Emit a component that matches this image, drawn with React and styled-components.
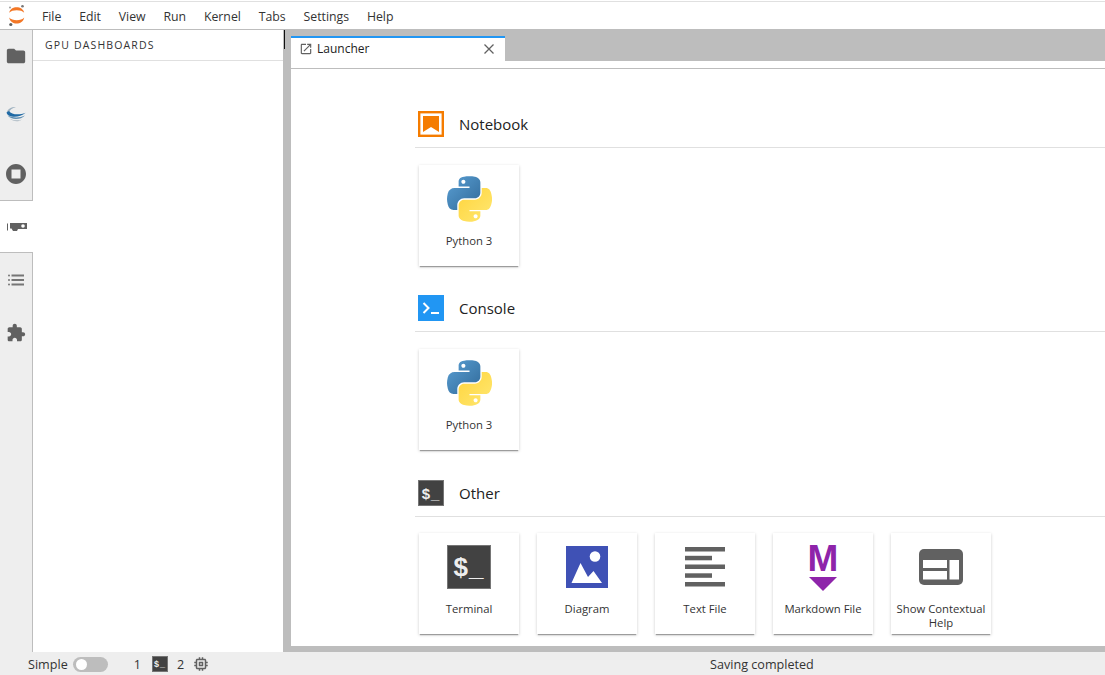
import React from 'react';
import styled, { createGlobalStyle } from 'styled-components';

const GlobalStyle = createGlobalStyle`
  html, body, #root { margin: 0; height: 100%; }
  body {
    font-family: "Open Sans", "Noto Sans", sans-serif;
    color: #333;
    background: #fff;
    overflow: hidden;
  }
`;

const Shell = styled.div`
  display: flex;
  flex-direction: column;
  width: 1105px;
  height: 675px;
`;

const TopBar = styled.header`
  display: flex;
  align-items: center;
  height: 27px;
  margin-top: 1px;
  border-top: 1px solid #e0e0e0;
  border-bottom: 1px solid #bdbdbd;
  flex: none;
`;

const LogoSlot = styled.div`
  width: 33px;
  display: flex;
  justify-content: center;
`;

const MenuItem = styled.div`
  font-size: 12.3px;
  padding: 2px 8.9px 0;
  color: #333;
`;

const Body = styled.div`
  flex: 1;
  display: flex;
  min-height: 0;
`;

const SideBar = styled.nav`
  width: 33px;
  flex: none;
  display: flex;
  flex-direction: column;
  background: #eee;
`;

const SideTab = styled.div`
  height: ${(p) => p.$h}px;
  flex: none;
  display: flex;
  align-items: center;
  justify-content: center;
  box-sizing: border-box;
  background: ${(p) => (p.$active ? '#fff' : '#eee')};
  border-right: ${(p) => (p.$active ? 'none' : '1px solid #bdbdbd')};
  border-bottom: ${(p) => (p.$last ? '1px solid #bdbdbd' : 'none')};
  border-top: ${(p) => (p.$first ? '1px solid #bdbdbd' : 'none')};
`;

const SideRest = styled.div`
  flex: 1;
  border-right: 1px solid #bdbdbd;
`;

const Panel = styled.aside`
  width: 250px;
  flex: none;
  background: #fff;
`;

const PanelHead = styled.div`
  height: 31px;
  box-sizing: border-box;
  display: flex;
  align-items: center;
  padding-left: 12px;
  border-bottom: 1px solid #e0e0e0;
  font-size: 10.5px;
  letter-spacing: 1.15px;
  color: #333;
`;

const Splitter = styled.div`
  width: 8px;
  flex: none;
  background: #bdbdbd;
  position: relative;
`;

const Caret = styled.span`
  position: absolute;
  left: 1px;
  top: 0;
  width: 1px;
  height: 19px;
  background: #111;
`;

const Main = styled.main`
  flex: 1;
  min-width: 0;
  display: flex;
  flex-direction: column;
  background: #bdbdbd;
  padding-bottom: 6px;
`;

const TabStrip = styled.div`
  height: 31px;
  flex: none;
  display: flex;
  align-items: flex-end;
  background: #bdbdbd;
`;

const Tab = styled.div`
  width: 214px;
  height: 25px;
  box-sizing: border-box;
  display: flex;
  align-items: center;
  padding: 0 10px 2px 8px;
  background: #fff;
  border-top: 2px solid #2196f3;
  font-size: 12px;
  color: #222;
`;

const TabLabel = styled.span`
  flex: 1;
  margin-left: 4px;
`;

const TabBand = styled.div`
  height: 8px;
  flex: none;
  box-sizing: border-box;
  background: #fff;
  border-bottom: 1px solid #bdbdbd;
`;

const Launcher = styled.section`
  flex: 1;
  min-height: 0;
  overflow: hidden;
  background: #fff;
  padding: 42px 0 0 124px;
`;

const Section = styled.div`
  margin-bottom: ${(p) => p.$gap}px;
`;

const SectionHead = styled.div`
  display: flex;
  align-items: center;
  height: 37px;
  box-sizing: border-box;
  padding: 0 0 10px 3px;
  border-bottom: 1px solid #e0e0e0;
`;

const SectionTitle = styled.h2`
  margin: 0 0 0 15px;
  font-size: 15px;
  font-weight: 400;
  color: #222;
`;

const Cards = styled.div`
  display: flex;
  gap: 17.3px;
  margin: ${(p) => p.$top}px 0 0 3.7px;
`;

const Card = styled.div`
  width: 100.7px;
  height: 101px;
  box-sizing: border-box;
  display: flex;
  flex-direction: column;
  align-items: center;
  background: #fff;
  box-shadow: 0 1px 3px rgba(0, 0, 0, 0.2), 0 2px 1px -1px rgba(0, 0, 0, 0.3);
`;

const CardIcon = styled.div`
  height: 68px;
  flex: none;
  display: flex;
  align-items: center;
  justify-content: center;
`;

const CardLabel = styled.div`
  margin-top: 1px;
  font-size: 11.3px;
  line-height: 14px;
  text-align: center;
  color: #333;
`;

const TermBox = styled.div`
  box-sizing: border-box;
  width: ${(p) => p.$size}px;
  height: ${(p) => p.$size}px;
  flex: none;
  display: flex;
  align-items: center;
  justify-content: center;
  background: #424242;
  border: 1px solid #757575;
  color: #eee;
  font-family: "Liberation Sans", sans-serif;
  font-weight: 700;
  font-size: ${(p) => p.$font}px;
  letter-spacing: 1px;
  line-height: 1;
  white-space: pre;
`;

const StatusBar = styled.footer`
  height: 23px;
  flex: none;
  box-sizing: border-box;
  display: flex;
  align-items: center;
  background: #eee;
  font-size: 12.6px;
  color: #333;
  padding: 1px 0 0 28px;
`;

const Switch = styled.div`
  width: 35px;
  height: 15px;
  margin-left: 5px;
  border-radius: 8px;
  background: #bdbdbd;
  display: flex;
  align-items: center;
  padding-left: 3px;
  box-sizing: border-box;
`;

const Knob = styled.span`
  width: 11px;
  height: 11px;
  border-radius: 50%;
  background: #fff;
`;

const StatusNum = styled.span`
  margin-left: ${(p) => p.$ml}px;
`;

const StatusChip = styled.div`
  display: flex;
  align-items: center;
  margin-left: 8px;
`;

const StatusBoxSlot = styled.div`
  margin-left: ${(p) => p.$ml}px;
  display: flex;
`;

const StatusMessage = styled.span`
  margin-left: 500px;
`;

function JupyterLogo() {
  return (
    <svg width="20" height="24" viewBox="0 0 20 24">
      <path d="M2.200 8.800C3.500 1.500 15.800 1.500 17.200 8.800 14.500 5.500 5 5.500 2.200 8.800z" fill="#f37726" />
      <path d="M2.200 13.500C3.500 21.500 15.800 21.500 17.200 13.500 14.500 17 5 17 2.200 13.500z" fill="#f37726" />
      <circle cx="15.500" cy="2.200" r="1.300" fill="#767677" />
      <circle cx="3" cy="3.500" r="1" fill="#9e9e9e" />
      <circle cx="3.800" cy="20.500" r="1.600" fill="#616262" />
    </svg>
  );
}

function Folder() {
  return (
    <svg width="22" height="22" viewBox="0 0 24 24" fill="#616161">
      <path d="M10 4H4c-1.100 0-1.990.9-1.990 2L2 18c0 1.100.9 2 2 2h16c1.100 0 2-.9 2-2V8c0-1.100-.9-2-2-2h-8l-2-2z" />
    </svg>
  );
}

function Swoosh() {
  return (
    <svg width="20" height="15" viewBox="0 0 20 15">
      <path d="M.8 5.500C1.500 2 5 0 10 0 6 1 3.500 3 3.200 5.500z" fill="#9fb2c0" />
      <path d="M.5 5.500C2 11 13 11.500 19.700 5.800 13 8.300 5.500 7.800 3 4z" fill="#1f6aa5" />
      <path d="M1.500 8.300C5 13.300 14.500 13.300 19 8.500 13.500 11.300 6 11 1.500 8.300z" fill="#5f8fb3" />
      <path d="M3.500 11.500C8 15 12.500 15 16 12.500 11.500 14 7.500 13.500 3.500 11.500z" fill="#aab8c2" />
    </svg>
  );
}

function Stop() {
  return (
    <svg width="24" height="24" viewBox="0 0 24 24" fill="#616161">
      <path d="M12 2C6.480 2 2 6.480 2 12s4.480 10 10 10 10-4.480 10-10S17.520 2 12 2zm4.500 14.500h-9v-9h9v9z" />
    </svg>
  );
}

function Gpu() {
  return (
    <svg width="20" height="8" viewBox="0 0 20 8">
      <rect x="0" y="0.500" width="1" height="7" fill="#616161" />
      <path d="M3 0h17v6h-9l-1 2H6L4.500 5.500H3z" fill="#616161" />
      <circle cx="16" cy="3" r="1.800" fill="#fff" />
    </svg>
  );
}

function ListIcon() {
  return (
    <svg width="16" height="12" viewBox="0 0 16 12" fill="#757575">
      <rect x="0" y="0.500" width="2" height="2" rx="1" />
      <rect x="0" y="5" width="2" height="2" rx="1" />
      <rect x="0" y="9.500" width="2" height="2" rx="1" />
      <rect x="3.500" y="0.500" width="12.500" height="2" />
      <rect x="3.500" y="5" width="12.500" height="2" />
      <rect x="3.500" y="9.500" width="12.500" height="2" />
    </svg>
  );
}

function Puzzle() {
  return (
    <svg width="20" height="20" viewBox="0 0 24 24" fill="#616161">
      <path d="M20.500 11H19V7c0-1.100-.9-2-2-2h-4V3.500C13 2.120 11.880 1 10.500 1S8 2.120 8 3.500V5H4c-1.100 0-1.990.9-1.990 2v3.800H3.500c1.490 0 2.700 1.210 2.700 2.700s-1.210 2.700-2.700 2.700H2V20c0 1.100.9 2 2 2h3.800v-1.500c0-1.490 1.210-2.700 2.700-2.700 1.490 0 2.700 1.210 2.700 2.700V22H17c1.100 0 2-.9 2-2v-4h1.500c1.380 0 2.500-1.120 2.500-2.500S21.880 11 20.500 11z" />
    </svg>
  );
}

function Launch() {
  return (
    <svg width="14" height="14" viewBox="0 0 24 24" fill="#616161">
      <path d="M19 19H5V5h7V3H5c-1.110 0-2 .9-2 2v14c0 1.100.89 2 2 2h14c1.100 0 2-.9 2-2v-7h-2v7zM14 3v2h3.590l-9.830 9.830 1.410 1.410L19 6.410V10h2V3h-7z" />
    </svg>
  );
}

function CloseX() {
  return (
    <svg width="12" height="12" viewBox="0 0 12 12" stroke="#616161" strokeWidth="1.300">
      <path d="M1.500 1.500l9 9M10.500 1.500l-9 9" />
    </svg>
  );
}

function NotebookIcon() {
  return (
    <svg width="26" height="26" viewBox="0 0 26 26">
      <rect x="1.200" y="1.200" width="23.600" height="23.600" fill="#fff" stroke="#f57c00" strokeWidth="2.400" />
      <path d="M5 5h16v16l-8-5-8 5z" fill="#f57c00" />
    </svg>
  );
}

function ConsoleIcon() {
  return (
    <svg width="26" height="26" viewBox="0 0 26 26">
      <rect width="26" height="26" fill="#2196f3" />
      <path d="M5.500 8l5 5-5 5" fill="none" stroke="#fff" strokeWidth="2" />
      <rect x="13" y="17" width="8" height="2" fill="#fff" />
    </svg>
  );
}

function PythonLogo() {
  const id = React.useId().replace(/[^a-z0-9]/gi, '');
  return (
    <svg width="45" height="46" viewBox="0 0 111 112" style={{ display: 'block' }}>
      <defs>
        <linearGradient id={`b${id}`} x1="0" y1="0" x2="1" y2="1">
          <stop offset="0" stopColor="#5a9fd4" />
          <stop offset="1" stopColor="#306998" />
        </linearGradient>
        <linearGradient id={`y${id}`} x1="0" y1="0" x2="1" y2="1">
          <stop offset="0" stopColor="#ffd43b" />
          <stop offset="1" stopColor="#ffe873" />
        </linearGradient>
      </defs>
      <path
        fill={`url(#b${id})`}
        d="M54.920 0c-4.580.02-8.960.41-12.810 1.090C30.760 3.100 28.700 7.290 28.700 15.030v10.220h26.810v3.410H18.640c-7.790 0-14.620 4.680-16.750 13.590-2.460 10.210-2.570 16.590 0 27.250 1.910 7.940 6.460 13.590 14.250 13.590h9.220V70.840c0-8.850 7.660-16.650 16.750-16.650h26.780c7.450 0 13.400-6.140 13.400-13.630V15.030c0-7.270-6.130-12.720-13.400-13.940C64.280.33 59.500-.02 54.920 0zM40.420 8.220c2.770 0 5.030 2.300 5.030 5.120 0 2.820-2.260 5.100-5.030 5.100-2.780 0-5.030-2.280-5.030-5.100 0-2.820 2.250-5.120 5.030-5.120z"
      />
      <path
        fill={`url(#y${id})`}
        d="M85.640 28.660v11.900c0 9.230-7.830 17-16.750 17H42.110c-7.340 0-13.410 6.280-13.410 13.630v25.530c0 7.270 6.320 11.540 13.410 13.630 8.490 2.500 16.630 2.950 26.780 0 6.750-1.950 13.410-5.890 13.410-13.630V86.500H55.510v-3.400h40.190c7.790 0 10.700-5.440 13.410-13.600 2.800-8.410 2.680-16.500 0-27.270-1.930-7.760-5.600-13.570-13.410-13.570H85.640zM70.570 93.310c2.780 0 5.030 2.280 5.030 5.090 0 2.830-2.250 5.130-5.030 5.130-2.770 0-5.030-2.300-5.030-5.130 0-2.810 2.260-5.090 5.030-5.090z"
      />
    </svg>
  );
}

function DiagramIcon() {
  return (
    <svg width="42" height="42" viewBox="0 0 42 42" style={{ display: 'block' }}>
      <rect width="42" height="42" fill="#3f51b5" />
      <circle cx="29" cy="10.500" r="5.300" fill="#fff" />
      <path d="M5.500 37L14.500 17l7.500 14 5.500-6L36 37z" fill="#fff" />
    </svg>
  );
}

function TextFileIcon() {
  return (
    <svg width="40" height="40" viewBox="0 0 40 40" fill="#616161" style={{ display: 'block' }}>
      <rect y="0" width="40" height="4.500" />
      <rect y="8.800" width="27" height="4.500" />
      <rect y="17.500" width="40" height="4.500" />
      <rect y="26.300" width="27" height="4.500" />
      <rect y="35" width="40" height="4.500" />
    </svg>
  );
}

function MarkdownIcon() {
  return (
    <svg width="32" height="60" viewBox="0 0 32 60" style={{ display: 'block' }}>
      <text
        x="16"
        y="34"
        textAnchor="middle"
        fontFamily="Liberation Sans, sans-serif"
        fontWeight="700"
        fontSize="37"
        fill="#8e24aa"
      >
        M
      </text>
      <path d="M2 40h28L16 54z" fill="#8e24aa" />
    </svg>
  );
}

function HelpIcon() {
  return (
    <svg width="44" height="36" viewBox="0 0 44 36" style={{ display: 'block' }}>
      <rect width="44" height="36" rx="5" fill="#616161" />
      <rect x="4" y="11" width="24" height="8" fill="#fff" />
      <rect x="4" y="22" width="24" height="8.500" fill="#fff" />
      <rect x="30.500" y="11" width="9.500" height="19.500" fill="#fff" />
    </svg>
  );
}

const menus = ['File', 'Edit', 'View', 'Run', 'Kernel', 'Tabs', 'Settings', 'Help'];

const others = [
  { label: 'Terminal', icon: <TermBox $size={44} $font={26}>$_</TermBox> },
  { label: 'Diagram', icon: <DiagramIcon /> },
  { label: 'Text File', icon: <TextFileIcon /> },
  { label: 'Markdown File', icon: <MarkdownIcon /> },
  { label: 'Show Contextual Help', icon: <HelpIcon /> },
];

function LauncherCard({ icon, label }) {
  return (
    <Card>
      <CardIcon>{icon}</CardIcon>
      <CardLabel>{label}</CardLabel>
    </Card>
  );
}

export default function App() {
  return (
    <Shell>
      <GlobalStyle />
      <TopBar>
        <LogoSlot>
          <JupyterLogo />
        </LogoSlot>
        {menus.map((m) => (
          <MenuItem key={m}>{m}</MenuItem>
        ))}
      </TopBar>
      <Body>
        <SideBar>
          <SideTab $h={52}><Folder /></SideTab>
          <SideTab $h={65}><Swoosh /></SideTab>
          <SideTab $h={54} $last><Stop /></SideTab>
          <SideTab $h={51} $active><Gpu /></SideTab>
          <SideTab $h={55} $first><ListIcon /></SideTab>
          <SideTab $h={52}><Puzzle /></SideTab>
          <SideRest />
        </SideBar>
        <Panel>
          <PanelHead>GPU DASHBOARDS</PanelHead>
        </Panel>
        <Splitter>
          <Caret />
        </Splitter>
        <Main>
          <TabStrip>
            <Tab>
              <Launch />
              <TabLabel>Launcher</TabLabel>
              <CloseX />
            </Tab>
          </TabStrip>
          <TabBand />
          <Launcher>
            <Section $gap={29}>
              <SectionHead>
                <NotebookIcon />
                <SectionTitle>Notebook</SectionTitle>
              </SectionHead>
              <Cards $top={17}>
                <LauncherCard icon={<PythonLogo />} label="Python 3" />
              </Cards>
            </Section>
            <Section $gap={30}>
              <SectionHead>
                <ConsoleIcon />
                <SectionTitle>Console</SectionTitle>
              </SectionHead>
              <Cards $top={17}>
                <LauncherCard icon={<PythonLogo />} label="Python 3" />
              </Cards>
            </Section>
            <Section $gap={0}>
              <SectionHead>
                <TermBox $size={26} $font={15}>$_</TermBox>
                <SectionTitle>Other</SectionTitle>
              </SectionHead>
              <Cards $top={16}>
                {others.map((o) => (
                  <LauncherCard key={o.label} icon={o.icon} label={o.label} />
                ))}
              </Cards>
            </Section>
          </Launcher>
        </Main>
      </Body>
      <StatusBar>
        Simple
        <Switch>
          <Knob />
        </Switch>
        <StatusNum $ml={26}>1</StatusNum>
        <StatusBoxSlot $ml={11}>
          <TermBox $size={16} $font={9}>$_</TermBox>
        </StatusBoxSlot>
        <StatusNum $ml={9}>2</StatusNum>
        <StatusChip>
          <svg width="18" height="18" viewBox="0 0 24 24" fill="#616161">
            <path d="M15 9H9v6h6V9zm-2 4h-2v-2h2v2zm8-2V9h-2V7c0-1.100-.9-2-2-2h-2V3h-2v2h-2V3H9v2H7c-1.100 0-2 .9-2 2v2H3v2h2v2H3v2h2v2c0 1.100.9 2 2 2h2v2h2v-2h2v2h2v-2h2c1.100 0 2-.9 2-2v-2h2v-2h-2v-2h2zm-4 6H7V7h10v10z" />
          </svg>
        </StatusChip>
        <StatusMessage>Saving completed</StatusMessage>
      </StatusBar>
    </Shell>
  );
}
